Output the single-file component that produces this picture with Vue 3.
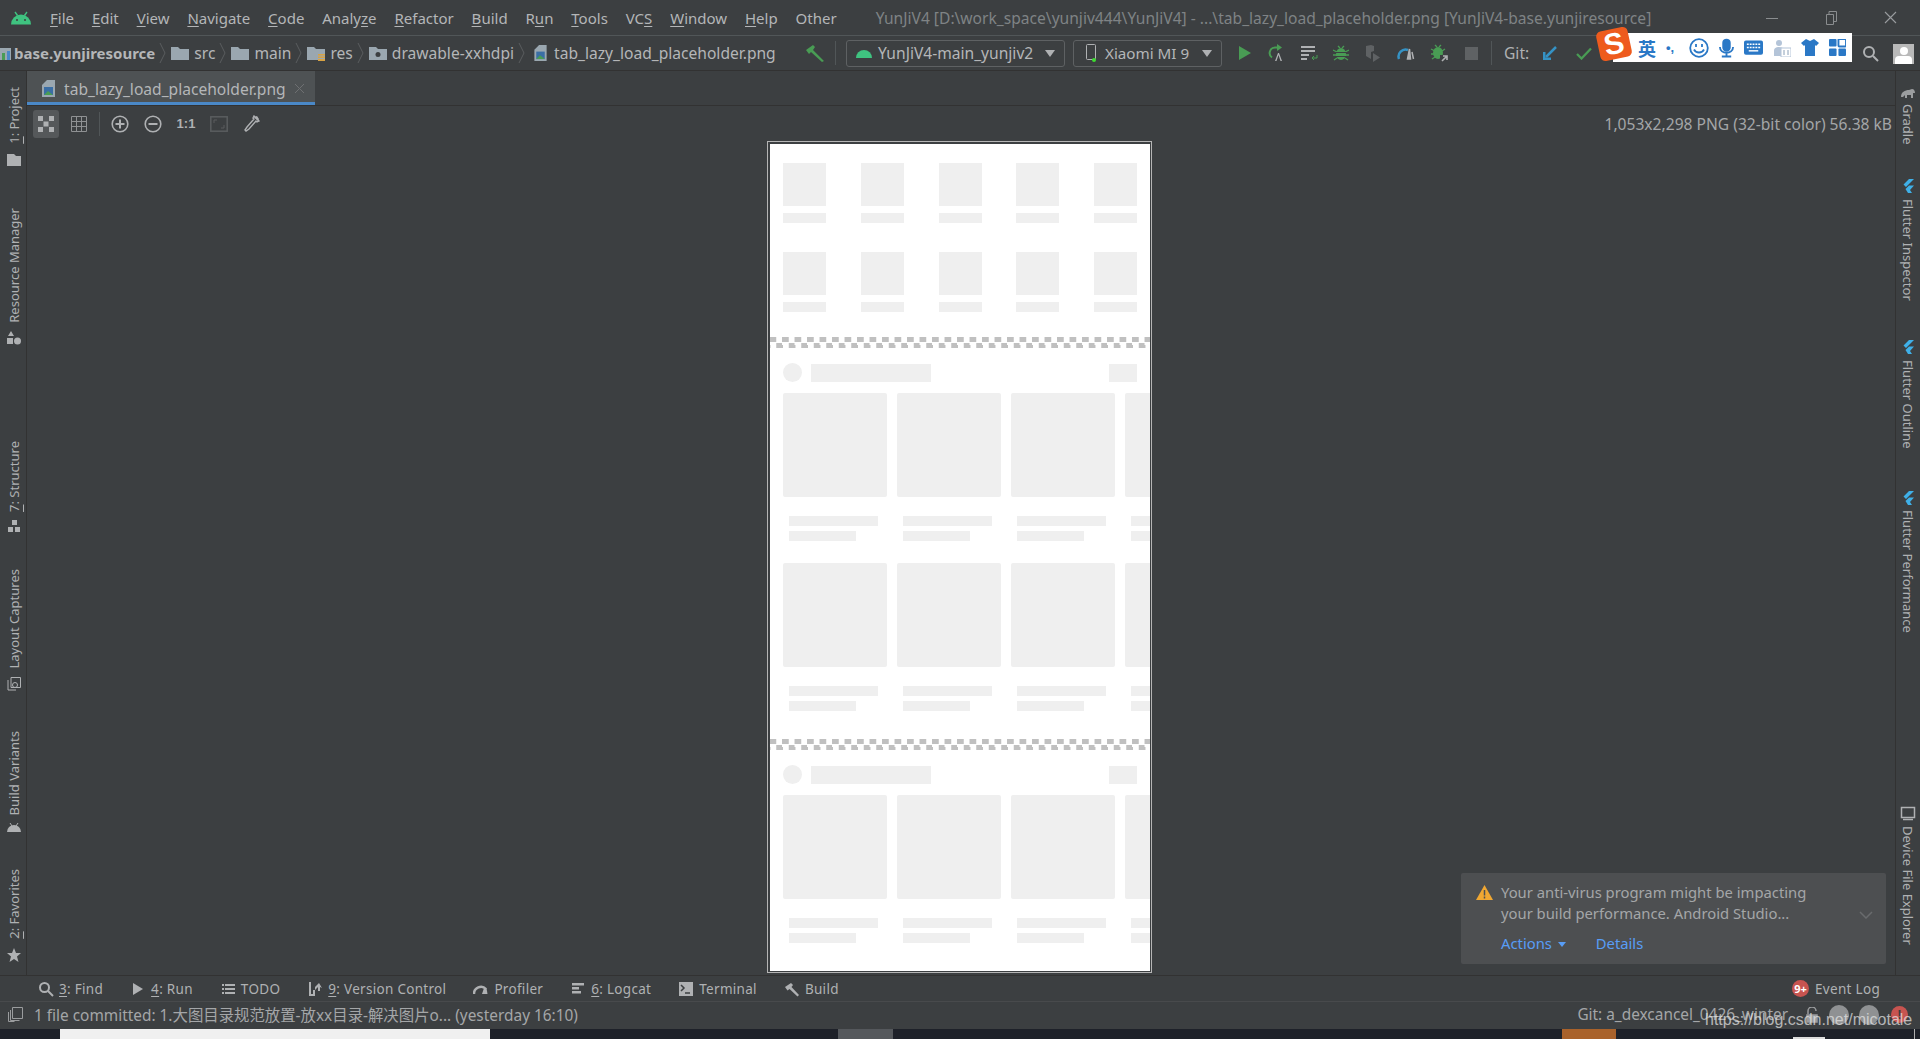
<template>
  <div class="ide">
    <!-- title bar -->
    <header class="titlebar">
      <svg class="logo" viewBox="0 0 22 14" width="22" height="14">
        <path d="M1 13.5a10 10 0 0 1 20 0z" fill="#3fc380" />
        <path d="M5 1l2.5 3.5M17 1l-2.5 3.5" stroke="#3fc380" stroke-width="1.4" />
        <circle cx="7" cy="9" r="1" fill="#3c3f41" />
        <circle cx="15" cy="9" r="1" fill="#3c3f41" />
      </svg>
      <nav class="menu">
        <span v-for="m in menus" :key="m.pre + m.u + m.post">{{ m.pre }}<u>{{ m.u }}</u>{{ m.post }}</span>
      </nav>
      <div class="window-title">YunJiV4 [D:\work_space\yunjiv444\YunJiV4] - ...\tab_lazy_load_placeholder.png [YunJiV4-base.yunjiresource]</div>
      <div class="win-buttons">
        <svg width="12" height="12" viewBox="0 0 12 12"><path d="M0 6.5h12" stroke="#8a8d8f" /></svg>
        <svg width="12" height="14" viewBox="0 0 12 14" fill="none" stroke="#8a8d8f"><path d="M1.5 3.5h7v10h-7zM4 3V.5h7.5v10H9" /></svg>
        <svg width="13" height="13" viewBox="0 0 13 13"><path d="M1 1l11 11M12 1L1 12" stroke="#9a9d9f" stroke-width="1.1" /></svg>
      </div>
    </header>

    <!-- navigation bar -->
    <div class="navbar">
      <div class="crumbs">
        <svg class="module-icon" width="11" height="14" viewBox="0 0 11 14">
          <rect x="0" y="2" width="11" height="12" fill="#9aa7b0" />
          <rect x="2" y="7" width="3" height="7" fill="#499c54" />
          <rect x="7" y="5" width="3" height="9" fill="#4a88c7" />
        </svg>
        <template v-for="c in crumbs" :key="c.text">
          <svg v-if="c.icon" class="crumb-icon" :class="{ 'crumb-file': c.last }" :width="c.w || 18" height="16" :viewBox="c.last ? '0 0 13 17' : '0 0 18 16'" v-html="c.icon"></svg>
          <span class="crumb-text" :class="{ bold: c.bold }">{{ c.text }}</span>
          <svg v-if="!c.last" class="chevron" width="7" height="22" viewBox="0 0 7 22"><path d="M1 1l5 10-5 10" fill="none" stroke="#5a5d5f" /></svg>
        </template>
      </div>
      <svg class="hammer" width="22" height="20" viewBox="0 0 22 20"><path d="M2 7l7-5 2 2-2 3 11 11-2 1L7 9 5 11z" fill="#499c54" /></svg>
      <i class="sep"></i>
      <div class="combo module-combo">
        <svg width="16" height="10" viewBox="0 0 16 10"><path d="M0 10a8 8 0 0 1 16 0z" fill="#3fc380" /></svg>
        <span>YunJiV4-main_yunjiv2</span><b class="caret"></b>
      </div>
      <div class="combo device-combo">
        <svg width="10" height="18" viewBox="0 0 10 18"><rect x=".5" y=".5" width="9" height="15" rx="1" fill="none" stroke="#afb1b3" /><circle cx="8" cy="16" r="2" fill="#3ddc30" /></svg>
        <span>Xiaomi MI 9</span><b class="caret"></b>
      </div>
      <div class="actions">
        <svg width="14" height="16" viewBox="0 0 14 16"><path d="M1 1l12 7-12 7z" fill="#499c54" /></svg>
        <svg width="18" height="18" viewBox="0 0 18 18"><path d="M12 3.5H8a5.500 5.500 0 0 0-3 10" fill="none" stroke="#499c54" stroke-width="2" /><path d="M10 0l5 3.500-5 3.500z" fill="#499c54" /><path d="M8 17l3-8h1l3 8h-1.500l-2-6-2 6z" fill="#afb1b3" /></svg>
        <svg width="18" height="16" viewBox="0 0 18 16"><path d="M1 1h14v2H1zM1 5h14v2H1zM1 9h8v2H1zM1 13h6v2H1z" fill="#afb1b3" /><path d="M17 10v3h-5m2-2l-2 2 2 2" fill="none" stroke="#499c54" /></svg>
        <svg width="16" height="16" viewBox="0 0 16 16"><ellipse cx="8" cy="9" rx="5" ry="6" fill="#499c54" /><path d="M0 5l4 2M16 5l-4 2M0 10h4M16 10h-4M1 15l3-2M15 15l-3-2M5 1l2 2M11 1L9 3M3 7h10M3 11h10" stroke="#499c54" stroke-width="1.300" /><path d="M3 7.500h10M3 11.500h10" stroke="#3c3f41" /></svg>
        <svg width="18" height="18" viewBox="0 0 18 18"><path d="M2 2l5-1 3 1v5l-3 1v7l-5-3z" fill="#5f6264" /><path d="M9 9l7 4.500-7 4.500z" fill="#5f6264" /></svg>
        <svg width="18" height="14" viewBox="0 0 18 14"><path d="M2 13a7 7 0 0 1 9-9" fill="none" stroke="#3592c4" stroke-width="2.500" /><path d="M12.500 3l-2 10h3zM15 6l1.500 7" stroke="#afb1b3" stroke-width="1.500" fill="#afb1b3" /></svg>
        <svg width="20" height="18" viewBox="0 0 20 18"><ellipse cx="8" cy="9" rx="5" ry="6" fill="#499c54" /><path d="M1 5l4 2M1 10h4M2 15l3-2M5 1l2 2M11 1L9 3M15 5l-3 2" stroke="#499c54" stroke-width="1.300" /><path d="M10 11h9v7h-9z" fill="#3c3f41" /><path d="M12 17l5-5m-4 0h4v4" fill="none" stroke="#afb1b3" stroke-width="1.600" /></svg>
        <svg width="13" height="13" viewBox="0 0 13 13"><rect width="13" height="13" fill="#5f6264" /></svg>
      </div>
      <i class="sep"></i>
      <span class="git-label">Git:</span>
      <svg class="git-update" width="16" height="16" viewBox="0 0 16 16"><path d="M14 2L4 12" stroke="#3592c4" stroke-width="2.500" /><path d="M1 7v8h8v-2.500H3.500V7z" fill="#3592c4" /></svg>
      <svg class="git-commit" width="16" height="13" viewBox="0 0 16 13"><path d="M1 7l4.500 4.500L15 1.500" fill="none" stroke="#499c54" stroke-width="2.300" /></svg>
      <svg class="search" width="17" height="17" viewBox="0 0 17 17" fill="none" stroke="#afb1b3" stroke-width="2"><circle cx="7" cy="7" r="5" /><path d="M11 11l5 5" /></svg>
      <div class="avatar"><i></i><b></b></div>

      <!-- sogou input bar, floats over the toolbar -->
      <div class="sogou">
        <span class="sogou-logo">S</span>
        <span class="sogou-zh">英</span>
        <span class="sogou-punct">•,</span>
        <svg width="20" height="20" viewBox="0 0 20 20" fill="none" stroke="#2a78c6" stroke-width="1.800"><circle cx="10" cy="10" r="8.800" /><path d="M5 11.500c2 4 8 4 10 0M7 6v3M13 6v3" /></svg>
        <svg width="15" height="20" viewBox="0 0 16 20" fill="none" stroke="#2a78c6" stroke-width="2"><rect x="4.500" y="1" width="7" height="12" rx="3.500" fill="#2a78c6" /><path d="M1 9c0 8 14 8 14 0M8 15v4M3 19h10" /></svg>
        <svg width="19" height="15" viewBox="0 0 20 15"><rect width="20" height="15" rx="2" fill="#2a78c6" /><path d="M3 4h14M3 7.500h14" stroke="#fff" stroke-dasharray="2 1" stroke-width="1.500" /><path d="M5 11h10" stroke="#fff" stroke-width="1.500" /></svg>
        <svg width="18" height="18" viewBox="0 0 18 18"><circle cx="6" cy="4" r="3" fill="#b4c4d8" /><path d="M1 17v-5c0-3 2-4 5-4s4 1 5 2v7z" fill="#b4c4d8" /><rect x="8" y="9" width="10" height="9" fill="#fff" stroke="#b4c4d8" /><path d="M11 11v5M15 11v5" stroke="#8aa0b8" /></svg>
        <svg width="18" height="17" viewBox="0 0 18 17"><path d="M5 0l4 2 4-2 5 4-3 3-1-1v11H4V6L3 7 0 4z" fill="#2a78c6" /></svg>
        <svg width="17" height="17" viewBox="0 0 18 18"><rect width="8" height="8" rx="1" fill="#2a78c6" /><rect x="10" y="0" width="8" height="8" rx="1" fill="none" stroke="#2a78c6" stroke-width="2" /><rect y="10" width="8" height="8" rx="1" fill="#2a78c6" /><rect x="10" y="10" width="8" height="8" rx="1" fill="#2a78c6" /></svg>
      </div>
    </div>

    <div class="workspace">
      <aside class="strip strip-left">
        <div v-for="t in leftTools" :key="t.rest" class="side-tool" :style="slotStyle(t)">
          <span class="side-label"><u>{{ t.u }}</u>{{ t.rest }}</span>
          <svg width="14" height="14" viewBox="0 0 14 14" v-html="t.icon"></svg>
        </div>
      </aside>

      <main class="center">
        <div class="tabs">
          <div class="tab">
            <svg width="13" height="17" viewBox="0 0 13 17" v-html="fileIcon"></svg>
            <span>tab_lazy_load_placeholder.png</span>
            <svg width="9" height="9" viewBox="0 0 9 9"><path d="M0 0l9 9M9 0L0 9" stroke="#6e7072" /></svg>
          </div>
        </div>

        <div class="image-toolbar">
          <button class="img-btn active">
            <svg width="16" height="16" viewBox="0 0 16 16" fill="#afb1b3"><path d="M0 0h5v5H0zM11 0h5v5h-5zM5.500 5.500h5v5h-5zM0 11h5v5H0zM11 11h5v5h-5z" /></svg>
          </button>
          <button class="img-btn">
            <svg width="16" height="16" viewBox="0 0 16 16" fill="none" stroke="#8f9193"><path d="M.5.500h15v15H.5zM5.500 0v16M10.500 0v16M0 5.500h16M0 10.500h16" /></svg>
          </button>
          <i class="sep"></i>
          <button class="img-btn">
            <svg width="18" height="18" viewBox="0 0 18 18" fill="none" stroke="#afb1b3" stroke-width="1.600"><circle cx="9" cy="9" r="7.800" /><path d="M4.500 9h9M9 4.500v9" stroke-width="2" /></svg>
          </button>
          <button class="img-btn">
            <svg width="18" height="18" viewBox="0 0 18 18" fill="none" stroke="#afb1b3" stroke-width="1.600"><circle cx="9" cy="9" r="7.800" /><path d="M4.500 9h9" stroke-width="2" /></svg>
          </button>
          <span class="one-to-one">1:1</span>
          <button class="img-btn">
            <svg width="18" height="16" viewBox="0 0 18 16" fill="none" stroke="#5a5d5f" stroke-width="1.500"><rect x=".8" y=".8" width="16.400" height="14.400" /><path d="M4 7V4h3M14 9v3h-3" stroke-width="1" /></svg>
          </button>
          <button class="img-btn">
            <svg width="16" height="17" viewBox="0 0 16 17"><path d="M10 1l5 5-2 1-1-1-7 8-3 2-1-1 2-3 7-8-1-1z" fill="none" stroke="#afb1b3" stroke-width="1.400" /><path d="M10 2l4 4 1-2-2-3z" fill="#afb1b3" /></svg>
          </button>
          <span class="image-info">1,053x2,298 PNG (32-bit color) 56.38 kB</span>
        </div>

        <div class="viewer">
          <div class="image-frame">
            <div class="placeholder">
              <div class="square-grid">
                <div v-for="n in 10" :key="n" class="square-cell"><i></i><b></b></div>
              </div>
              <template v-for="s in sections" :key="s.id">
                <div class="checker"></div>
                <section class="feed">
                  <div class="feed-head"><i class="dot"></i><i class="title-bar"></i><i class="more"></i></div>
                  <div v-for="r in s.rows" :key="r" class="card-row">
                    <div v-for="c in 4" :key="c" class="card">
                      <i class="thumb"></i>
                      <i class="line"></i>
                      <i class="line short"></i>
                    </div>
                  </div>
                </section>
              </template>
            </div>
          </div>
        </div>

        <div class="notification">
          <svg class="warn" width="17" height="15" viewBox="0 0 17 15"><path d="M8.500 0L17 15H0z" fill="#f0a732" /><path d="M8.500 5v5.500M8.500 11.500v2" stroke="#4d4f51" stroke-width="1.500" /></svg>
          <div class="note-body">
            <p>Your anti-virus program might be impacting<br />your build performance. Android Studio...</p>
            <div class="note-links"><a>Actions <b class="link-caret"></b></a><a>Details</a></div>
          </div>
          <svg class="note-chevron" width="14" height="8" viewBox="0 0 14 8"><path d="M1 1l6 6 6-6" fill="none" stroke="#696b6d" stroke-width="1.500" /></svg>
        </div>
      </main>

      <aside class="strip strip-right">
        <div v-for="t in rightTools" :key="t.label" class="side-tool" :style="slotStyle(t)">
          <svg width="16" height="16" viewBox="0 0 16 16" v-html="t.icon"></svg>
          <span class="side-label">{{ t.label }}</span>
        </div>
      </aside>
    </div>

    <!-- bottom tool window bar -->
    <div class="toolbar-bottom">
      <div v-for="b in bottomTools" :key="b.rest" class="bottom-tool">
        <svg width="16" height="16" viewBox="0 0 16 16" v-html="b.icon"></svg>
        <span><u>{{ b.u }}</u>{{ b.rest }}</span>
      </div>
      <div class="event-log">
        <span class="badge">9+</span>
        <span>Event Log</span>
      </div>
    </div>

    <!-- status bar -->
    <footer class="statusbar">
      <svg width="15" height="15" viewBox="0 0 15 15" fill="none" stroke="#9a9c9e"><path d="M4.500.5h10v11h-10zM2.500 3v10.500h9M.5 5v9.500h6" /></svg>
      <span class="commit">1 file committed: 1.大图目录规范放置-放xx目录-解决图片o... (yesterday 16:10)</span>
      <span class="branch">Git: a_dexcancel_0426_winter</span>
      <svg width="13" height="16" viewBox="0 0 13 16" fill="none" stroke="#9a9c9e" stroke-width="1.500"><path d="M2 7V4a4 4 0 0 1 8 0" /><path d="M1 8h10v7H1z" fill="#9a9c9e" /></svg>
      <span class="face"></span>
      <span class="face"></span>
      <span class="error-dot">!</span>
    </footer>

    <div class="taskbar">
      <i class="task-white"></i>
      <i class="task-gray"></i>
      <i class="task-orange"></i>
      <i class="task-clock"></i>
      <i class="task-edge"></i>
    </div>

    <div class="watermark">https://blog.csdn.net/micotale</div>
  </div>
</template>

<script setup>
const menus = [
  { pre: '', u: 'F', post: 'ile' },
  { pre: '', u: 'E', post: 'dit' },
  { pre: '', u: 'V', post: 'iew' },
  { pre: '', u: 'N', post: 'avigate' },
  { pre: '', u: 'C', post: 'ode' },
  { pre: 'Analy', u: 'z', post: 'e' },
  { pre: '', u: 'R', post: 'efactor' },
  { pre: '', u: 'B', post: 'uild' },
  { pre: 'R', u: 'u', post: 'n' },
  { pre: '', u: 'T', post: 'ools' },
  { pre: 'VC', u: 'S', post: '' },
  { pre: '', u: 'W', post: 'indow' },
  { pre: '', u: 'H', post: 'elp' },
  { pre: 'Other', u: '', post: '' }
]

const folder = '<path d="M0 2h7l2 2h9v11H0z" fill="#9aa7b0"/>'
const resFolder = folder + '<path d="M11 9h7v1.500h-7zM11 11.500h7V13h-7zM11 14h7v2h-7z" fill="#d9a343"/>'
const dotFolder = folder + '<circle cx="9" cy="9.500" r="2.500" fill="#3c3f41"/>'
const fileIcon = '<path d="M5 0h8v17H0V5z" fill="#9aa7b0"/><rect x="2" y="7" width="9" height="8" fill="#3a6ea5"/><path d="M2 15l4-4 5 4z" fill="#499c54"/>'

const crumbs = [
  { text: 'base.yunjiresource', bold: true },
  { text: 'src', icon: folder },
  { text: 'main', icon: folder },
  { text: 'res', icon: resFolder },
  { text: 'drawable-xxhdpi', icon: dotFolder },
  { text: 'tab_lazy_load_placeholder.png', icon: fileIcon, w: 13, last: true }
]

const g = '#afb1b3'
const leftTools = [
  { u: '1', rest: ': Project', top: 16, h: 80, icon: `<path d="M0 1h7l2 2h5v10H0z" fill="${g}"/>` },
  { u: '', rest: 'Resource Manager', top: 41, h: 137, icon: `<path d="M4 0l3 5H1zM0 7h6v6H0z" fill="${g}"/><circle cx="10.500" cy="10" r="3.500" fill="${g}"/>` },
  { u: '7', rest: ': Structure', top: 96, h: 92, icon: `<path d="M5 1h5v5H5zM1 8h5v5H1zM8 8h5v5H8z" fill="${g}"/>` },
  { u: '', rest: 'Layout Captures', top: 36, h: 122, icon: `<path d="M4 .5h9.500v10H4zM1 3v10h8" fill="none" stroke="${g}"/><circle cx="8" cy="8" r="2.500" fill="none" stroke="${g}"/>` },
  { u: '', rest: 'Build Variants', top: 40, h: 103, icon: `<path d="M0 12a7 7 0 0 1 14 0z" fill="${g}"/><path d="M3 3l2 3M11 3L9 6" stroke="${g}"/>` },
  { u: '2', rest: ': Favorites', top: 35, h: 93, icon: `<path d="M7 0l2 5h5l-4 3.500 1.500 5.500L7 11l-4.500 3L4 8.500 0 5h5z" fill="${g}"/>` }
]

const flutter = '<path d="M9 1h5L6 9 3.500 6.500zM9 7.500h5L10 12l2 3H8L5.500 11z" fill="#3fb0e8"/>'
const rightTools = [
  { label: 'Gradle', top: 15, h: 59, icon: `<path d="M1 11c0-5 4-7 8-7l3-1c2 0 3 2 3 4l-2 0v5h-2V9H7v3H5V9l-2 2z" fill="#9b9d9f"/>` },
  { label: 'Flutter Inspector', top: 33, h: 123, icon: flutter },
  { label: 'Flutter Outline', top: 38, h: 110, icon: flutter },
  { label: 'Flutter Performance', top: 41, h: 143, icon: flutter },
  { label: 'Device File Explorer', top: 173, h: 139, icon: `<rect x="1.500" y="1.500" width="13" height="10" fill="none" stroke="${g}" stroke-width="1.500"/><path d="M3 13.500h10" stroke="${g}" stroke-width="1.500"/>` }
]

const bottomTools = [
  { u: '3', rest: ': Find', icon: `<circle cx="6.500" cy="6.500" r="4.500" fill="none" stroke="${g}" stroke-width="2"/><path d="M10 10l5 5" stroke="${g}" stroke-width="2"/>` },
  { u: '4', rest: ': Run', icon: `<path d="M3 2l10 6-10 6z" fill="${g}"/>` },
  { u: '', rest: 'TODO', icon: `<path d="M2 3h2v2H2zM5 3h10v2H5zM2 7h2v2H2zM5 7h10v2H5zM2 11h2v2H2zM5 11h10v2H5z" fill="${g}"/>` },
  { u: '9', rest: ': Version Control', icon: `<path d="M2 1h2v14H2zM4 13h4v2H4zM6 9h2v4H6z" fill="${g}"/><path d="M8 9l3-3V10h2V6l2 1-3-5-4 4z" fill="${g}"/>` },
  { u: '', rest: 'Profiler', icon: `<path d="M1 13a7 7 0 0 1 12-5" fill="none" stroke="${g}" stroke-width="2.500"/><path d="M9 13l2-6 2.500 0 1 6z" fill="${g}"/>` },
  { u: '6', rest: ': Logcat', icon: `<path d="M2 2h12v2.500H2zM2 6h7v2.500H2zM2 10h9v2.500H2z" fill="${g}"/>` },
  { u: '', rest: 'Terminal', icon: `<rect x="1" y="1" width="14" height="14" fill="${g}"/><path d="M3 4l3 3-3 3M7 12h5" fill="none" stroke="#3c3f41" stroke-width="1.500"/>` },
  { u: '', rest: 'Build', icon: `<path d="M1 6l6-4 2 2-1.500 2L15 14l-1.500 1.500L5.500 8 3.500 9.500z" fill="${g}"/>` }
]

const sections = [
  { id: 'a', rows: 2 },
  { id: 'b', rows: 1 }
]

const slotStyle = (t) => ({ marginTop: `${t.top}px`, height: `${t.h}px` })
</script>

<style>
html, body { background: #3c3f41; overflow: hidden; }
</style>

<style scoped>
.ide {
  position: relative;
  width: 1920px;
  height: 1039px;
  display: flex;
  flex-direction: column;
  overflow: hidden;
  background: #3c3f41;
  color: #afb1b3;
  font-family: "Noto Sans", "Noto Sans CJK SC", sans-serif;
  font-size: 13px;
}
u { text-underline-offset: 2px; }
i { display: block; }

.titlebar {
  height: 36px;
  box-sizing: border-box;
  flex: none;
  display: flex;
  align-items: center;
  padding-left: 10px;
  border-bottom: 1px solid #515658;
}
.logo { flex: none; }
.menu {
  display: flex;
  gap: 17.9px;
  margin-left: 18px;
  font-size: 15px;
  color: #b4b6b8;
}
.window-title {
  margin-left: 39px;
  font-size: 15.6px;
  color: #7f8385;
  white-space: nowrap;
}
.win-buttons {
  margin-left: auto;
  display: flex;
  align-items: center;
  gap: 47px;
  padding-right: 23px;
}

.navbar {
  height: 35px;
  box-sizing: border-box;
  flex: none;
  display: flex;
  align-items: center;
  border-bottom: 1px solid #323232;
  position: relative;
}
.crumbs { display: flex; align-items: center; font-size: 15.6px; width: 804px; flex: none; }
.module-icon { margin-right: 3px; }
.crumb-text { color: #b4b6b8; white-space: nowrap; }
.crumb-text.bold { font-weight: 700; font-size: 15px; }
.crumb-icon { margin-right: 5px; flex: none; }
.crumb-file { margin-left: 4px; margin-right: 7px; }
.chevron { margin: 0 5px 0 4px; flex: none; }
.hammer { flex: none; }
.sep { width: 1px; height: 24px; background: #515658; flex: none; }
.navbar > .sep:first-of-type { margin-left: 9px; }
.combo {
  height: 27px;
  display: flex;
  align-items: center;
  gap: 6px;
  box-sizing: border-box;
  border: 1px solid #5e6163;
  border-radius: 3px;
  padding: 0 9px;
  font-size: 15.6px;
  color: #b4b6b8;
  flex: none;
}
.module-combo { width: 219px; margin-left: 10px; }
.device-combo { width: 149px; margin-left: 8px; padding-left: 12px; gap: 9px; font-size: 15.2px; }
.caret {
  margin-left: auto;
  border: 5px solid transparent;
  border-top: 7px solid #afb1b3;
  border-bottom: 0;
}
.actions {
  display: flex;
  align-items: center;
  gap: 15px;
  margin-left: 16px;
  width: 253px;
  flex: none;
}
.git-label { margin-left: 12px; font-size: 15.6px; }
.git-update { margin-left: 13px; }
.git-commit { margin-left: 18px; }
.search { position: absolute; left: 1862px; top: 9px; }
.avatar {
  position: absolute;
  left: 1893px;
  top: 8px;
  width: 21px;
  height: 20px;
  background: #b9b9b9;
  overflow: hidden;
}
.avatar i { width: 8px; height: 8px; border-radius: 50%; background: #fff; margin: 3px auto 0; }
.avatar b { display: block; width: 17px; height: 8px; background: #fff; margin: 1px auto 0; border-radius: 4px 4px 0 0; }

.sogou {
  position: absolute;
  left: 1613px;
  top: -3px;
  width: 239px;
  height: 29px;
  background: #fff;
  display: flex;
  align-items: center;
  padding-left: 25px;
  box-sizing: border-box;
  gap: 10px;
  color: #2a78c6;
}
.sogou-logo {
  position: absolute;
  left: -15px;
  top: -4px;
  width: 32px;
  height: 30px;
  background: #ee5b1d;
  border-radius: 5px;
  transform: rotate(-12deg);
  color: #fff;
  font: 700 30px/30px "Liberation Sans", sans-serif;
  text-align: center;
}
.sogou-zh { font: 700 18px/1 "Noto Sans CJK SC", sans-serif; }
.sogou-punct { font: 700 13px/1 "Liberation Sans", sans-serif; width: 13px; white-space: nowrap; }

.workspace { flex: 1; min-height: 0; display: flex; }
.strip {
  flex: none;
  display: flex;
  flex-direction: column;
  align-items: center;
  box-sizing: border-box;
}
.strip-left { width: 27px; border-right: 1px solid #323232; padding-left: 2px; }
.strip-right { width: 25px; border-left: 1px solid #323232; }
.side-tool {
  display: flex;
  flex-direction: column;
  align-items: center;
  justify-content: space-between;
  flex: none;
}
.side-label {
  writing-mode: vertical-rl;
  font-size: 13px;
  line-height: 16px;
  white-space: nowrap;
}
.strip-left .side-label { transform: rotate(180deg); }

.center { flex: 1; min-width: 0; display: flex; flex-direction: column; position: relative; }
.tabs { height: 35px; box-sizing: border-box; flex: none; border-bottom: 1px solid #323232; }
.tab {
  width: 288px;
  height: 34px;
  box-sizing: border-box;
  background: #4e5254;
  border-bottom: 3px solid #4a88c7;
  display: flex;
  align-items: center;
  padding: 4px 0 0 15px;
  gap: 9px;
  font-size: 15.6px;
  color: #b4b6b8;
}

.image-toolbar {
  height: 35px;
  flex: none;
  display: flex;
  align-items: center;
  padding: 0 3px 0 6px;
  gap: 7px;
}
.img-btn {
  width: 26px;
  height: 28px;
  border: 0;
  padding: 0;
  background: none;
  border-radius: 3px;
  display: flex;
  align-items: center;
  justify-content: center;
}
.img-btn.active { background: #55585a; }
.one-to-one { font: 700 13px/1 "Liberation Sans", sans-serif; width: 26px; text-align: center; }
.image-info { margin-left: auto; font-size: 15.6px; color: #a4a6a8; white-space: nowrap; }

.viewer { flex: 1; min-height: 0; padding-left: 740px; overflow: hidden; }
.image-frame {
  width: 385px;
  box-sizing: border-box;
  border: 1px solid #b5b5b5;
  padding: 2px 1px 1px 2px;
}
.placeholder { background: #fff; height: 827px; overflow: hidden; }

.square-grid {
  display: grid;
  grid-template-columns: repeat(5, 43px);
  justify-content: space-between;
  row-gap: 29px;
  padding: 19px 13px 25px;
}
.square-cell i { height: 43px; background: #efefef; }
.square-cell b { display: block; height: 10px; margin-top: 7px; background: #efefef; }

.checker {
  height: 11px;
  background: repeating-conic-gradient(#c0c0c0 0 25%, #fff 0 50%) 6.25px 0 / 12.5px 11px;
}
.feed { padding: 15px 0 28px 13px; overflow: hidden; }
.feed-head { display: flex; align-items: center; height: 19px; margin-bottom: 11px; padding-right: 13px; }
.dot { width: 19px; height: 19px; border-radius: 50%; background: #efefef; }
.title-bar { width: 120px; height: 18px; background: #efefef; margin-left: 9px; }
.more { width: 28px; height: 18px; background: #efefef; margin-left: auto; }
.card-row { display: flex; gap: 10px; margin-bottom: 22px; width: 500px; }
.card-row:last-child { margin-bottom: 0; }
.card { width: 104px; flex: none; }
.thumb { height: 104px; border-radius: 2px; background: #efefef; }
.line { height: 10px; width: 89px; margin: 19px 0 0 6px; background: #efefef; }
.line.short { width: 67px; margin-top: 5px; }

.notification {
  position: absolute;
  left: 1434px;
  top: 802px;
  width: 425px;
  height: 91px;
  box-sizing: border-box;
  background: #4d4f51;
  border-radius: 2px;
  padding: 9px 0 0 15px;
  display: flex;
  font-size: 14.8px;
  line-height: 21px;
  color: #a4a6a8;
}
.warn { margin-top: 3px; flex: none; }
.note-body { margin-left: 8px; }
.note-body p { margin: 0; white-space: nowrap; }
.note-links { display: flex; gap: 30px; margin-top: 9px; color: #589df6; }
.link-caret {
  display: inline-block;
  border: 4px solid transparent;
  border-top: 5px solid #589df6;
  border-bottom: 0;
  vertical-align: 2px;
  margin-left: 2px;
}
.note-chevron { position: absolute; left: 398px; top: 38px; }

.toolbar-bottom {
  height: 26px;
  flex: none;
  display: flex;
  align-items: center;
  gap: 27px;
  padding-left: 38px;
  border-top: 1px solid #323232;
  box-sizing: border-box;
  font-size: 13.5px;
  letter-spacing: .3px;
}
.bottom-tool { display: flex; align-items: center; gap: 5px; white-space: nowrap; }
.event-log { margin-left: auto; display: flex; align-items: center; gap: 6px; padding-right: 40px; }
.badge {
  width: 17px;
  height: 17px;
  border-radius: 50%;
  background: #c75450;
  color: #fff;
  font: 700 11px/17px "Noto Sans", sans-serif;
  text-align: center;
  letter-spacing: 0;
}

.statusbar {
  height: 28px;
  flex: none;
  display: flex;
  align-items: center;
  padding: 0 0 2px 8px;
  border-top: 1px solid #484a4c;
  box-sizing: border-box;
  font-size: 15.4px;
  color: #a4a6a8;
}
.commit { margin-left: 11px; white-space: nowrap; }
.branch { margin-left: auto; white-space: nowrap; margin-right: 18px; }
.face { width: 20px; height: 20px; border-radius: 50%; background: #8f9193; margin-left: 10px; flex: none; }
.error-dot {
  width: 17px;
  height: 17px;
  border-radius: 50%;
  background: #c75450;
  color: #3c3f41;
  font: 700 13px/17px "Liberation Sans", sans-serif;
  text-align: center;
  margin: 0 12px 0 12px;
  flex: none;
}

.taskbar {
  height: 10px;
  flex: none;
  background: #1e2129;
  display: flex;
  padding-left: 60px;
}
.task-white { width: 430px; background: #f0f0f0; }
.task-gray { width: 55px; margin-left: 348px; background: #55585c; }
.task-orange { width: 54px; margin-left: 669px; background: #a9622b; }
.task-clock { width: 32px; height: 2px; margin: 8px 0 0 177px; background: #dcdcdc; }
.task-edge { width: 1px; margin-left: 89px; background: #b0b0b0; }

.watermark {
  position: absolute;
  left: 1705px;
  top: 1010px;
  font: 16px/20px "Liberation Sans", sans-serif;
  color: rgba(230, 230, 230, .72);
  white-space: nowrap;
}
</style>
